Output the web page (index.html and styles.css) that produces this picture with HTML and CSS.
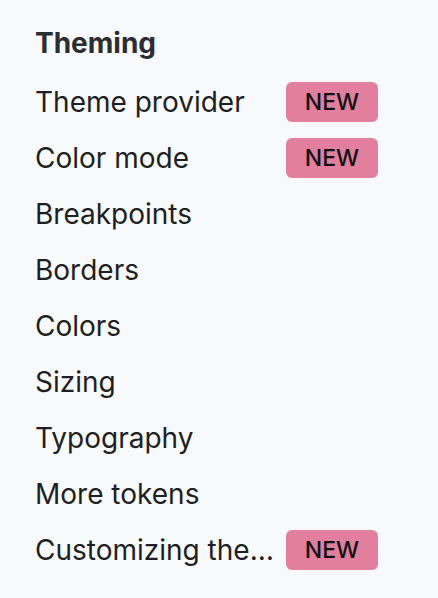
FILE: index.html
```html
<!DOCTYPE html>
<html lang="en">
<head>
    <meta charset="UTF-8">
    <meta name="viewport" content="width=device-width, initial-scale=1.0">
    <title>Theming</title>
    <link rel="stylesheet" href="styles.css">
</head>
<body>
    <nav class="sidebar">
        <h2 class="section-title">Theming</h2>
        <ul class="nav-list">
            <li class="nav-item"><span class="nav-label">Theme provider</span><span class="badge">NEW</span></li>
            <li class="nav-item"><span class="nav-label">Color mode</span><span class="badge">NEW</span></li>
            <li class="nav-item"><span class="nav-label">Breakpoints</span></li>
            <li class="nav-item"><span class="nav-label">Borders</span></li>
            <li class="nav-item"><span class="nav-label">Colors</span></li>
            <li class="nav-item"><span class="nav-label">Sizing</span></li>
            <li class="nav-item"><span class="nav-label">Typography</span></li>
            <li class="nav-item"><span class="nav-label">More tokens</span></li>
            <li class="nav-item"><span class="nav-label">Customizing the theme</span><span class="badge">NEW</span></li>
        </ul>
    </nav>
</body>
</html>
```

FILE: styles.css
```css
body {
    margin: 0;
    background: #f8f9fb;
    font-family: 'Inter', 'Noto Sans', sans-serif;
    color: #1e1f24;
}
.sidebar {
    padding: 15px 0 0 35px;
}
.section-title {
    margin: 0 0 3px;
    font-size: 28px;
    font-weight: 700;
    line-height: 56px;
    color: #2b2d33;
}
.nav-list {
    list-style: none;
    margin: 0;
    padding: 0;
}
.nav-item {
    display: flex;
    align-items: center;
    height: 56px;
    font-size: 28px;
}
.nav-label {
    width: 240px;
    white-space: nowrap;
    overflow: hidden;
    text-overflow: ellipsis;
}
.badge {
    margin-left: 11px;
    width: 92px;
    height: 40px;
    display: flex;
    align-items: center;
    justify-content: center;
    border-radius: 6px;
    background: #e27f9f;
    color: #111;
    font-size: 23px;
    font-weight: 500;
}
```
